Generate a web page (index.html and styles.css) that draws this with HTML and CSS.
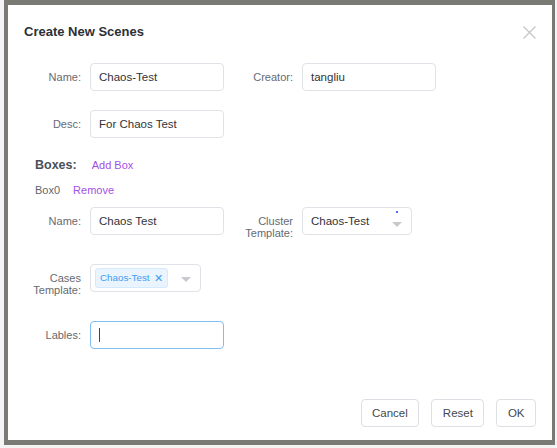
FILE: index.html
```html
<!DOCTYPE html>
<html>
<head>
<meta charset="utf-8">
<link rel="stylesheet" href="styles.css">
</head>
<body>
<div class="overlay">
  <div class="dialog">
    <div class="header">
      <div class="title">Create New Scenes</div>
      <svg class="close" width="13" height="13" viewBox="0 0 13 13"><path d="M0.5 0.5 L12.5 12.5 M12.5 0.5 L0.5 12.5" stroke="#c4c4c4" stroke-width="1.2" fill="none"/></svg>
    </div>
    <div class="body">
      <div class="row">
        <div class="field"><label class="lbl">Name:</label><div class="input">Chaos-Test</div></div>
        <div class="field"><label class="lbl">Creator:</label><div class="input">tangliu</div></div>
      </div>
      <div class="row">
        <div class="field"><label class="lbl">Desc:</label><div class="input">For Chaos Test</div></div>
      </div>
      <div class="boxes"><span class="boxes-title">Boxes:</span><a class="link">Add Box</a></div>
      <div class="box-head"><span class="box-name">Box0</span><a class="link">Remove</a></div>
      <div class="row tall">
        <div class="field"><label class="lbl">Name:</label><div class="input">Chaos Test</div></div>
        <div class="field"><label class="lbl">Cluster Template:</label>
          <div class="select sel-cluster">Chaos-Test<span class="arrow"></span><span class="dot"></span></div>
        </div>
      </div>
      <div class="row tall">
        <div class="field"><label class="lbl">Cases Template:</label>
          <div class="select sel-cases"><span class="tag">Chaos-Test<span class="tag-x">✕</span></span><span class="arrow"></span></div>
        </div>
      </div>
      <div class="row">
        <div class="field"><label class="lbl">Lables:</label><div class="input focus"><span class="caret"></span></div></div>
      </div>
    </div>
    <div class="footer">
      <button class="btn">Cancel</button>
      <button class="btn">Reset</button>
      <button class="btn">OK</button>
    </div>
  </div>
</div>
</body>
</html>
```
FILE: styles.css
```css
html, body {
  margin: 0;
  padding: 0;
  background: #f4f4f4;
  font-family: "Liberation Sans", Arial, sans-serif;
}
.overlay {
  margin-left: 4px;
  width: 551px;
  height: 445px;
  box-sizing: border-box;
  background: #7a7a74;
  padding: 5px 3px 5px 4px;
}
.dialog {
  width: 544px;
  height: 435px;
  background: #fff;
  box-sizing: border-box;
  display: flex;
  flex-direction: column;
  padding: 0 16px 13px 16px;
}
.header {
  display: flex;
  justify-content: space-between;
  align-items: center;
  height: 16px;
  margin-top: 19px;
}
.title {
  font-size: 13px;
  font-weight: bold;
  color: #2d3035;
  line-height: 16px;
}
.close {
  display: block;
  margin-top: 1px;
}
.body {
  flex: 1;
  margin-top: 23px;
}
.row {
  display: flex;
  gap: 12px;
  height: 28px;
  margin-bottom: 19px;
}
.row.tall {
  height: 38px;
}
.field {
  display: flex;
  align-items: flex-start;
}
.lbl {
  width: 57px;
  margin-right: 9px;
  text-align: right;
  font-size: 11px;
  line-height: 12px;
  padding-top: 8px;
  color: #666a70;
}
.input, .select {
  box-sizing: border-box;
  width: 134px;
  height: 28px;
  border: 1px solid #dfe2e6;
  border-radius: 4px;
  padding: 0 8px;
  font-size: 11.5px;
  line-height: 26px;
  color: #303338;
  position: relative;
}
.input.focus {
  border-color: #7fbdf3;
  display: flex;
  align-items: center;
}
.caret {
  display: block;
  width: 1px;
  height: 14px;
  background: #444;
}
.boxes {
  margin-top: -1px;
  line-height: 16px;
  padding-left: 11px;
}
.boxes-title {
  font-size: 12.5px;
  font-weight: bold;
  color: #4b5058;
  margin-right: 15px;
}
.link {
  font-size: 11px;
  color: #a450e6;
}
.box-head {
  margin-top: 8px;
  margin-bottom: 9px;
  line-height: 16px;
  padding-left: 11px;
}
.box-name {
  font-size: 11px;
  color: #62666c;
  margin-right: 13px;
}
.sel-cluster {
  width: 110px;
}
.sel-cases {
  width: 111px;
  padding: 0 4px;
  display: flex;
  align-items: center;
}
.tag {
  display: inline-flex;
  align-items: center;
  height: 20px;
  box-sizing: border-box;
  padding: 0 4px 0 4px;
  background: #e9f4ff;
  border: 1px solid #d5eafc;
  border-radius: 3px;
  font-size: 9.8px;
  line-height: 18px;
  color: #3f9cf0;
}
.tag-x {
  margin-left: 4px;
  font-size: 11px;
  color: #3f9cf0;
}
.arrow {
  position: absolute;
  right: 9px;
  top: 12px;
  width: 0;
  height: 0;
  border-left: 5px solid transparent;
  border-right: 5px solid transparent;
  border-top: 5px solid #c6c9ce;
}
.sel-cluster .arrow {
  top: 14px;
}
.dot {
  position: absolute;
  right: 13px;
  top: 3px;
  width: 2px;
  height: 2px;
  background: #1a3cf0;
  border-radius: 1px;
}
.footer {
  display: flex;
  justify-content: flex-end;
  gap: 12px;
}
.btn {
  font-family: "Liberation Sans", Arial, sans-serif;
  font-size: 11.5px;
  color: #44484e;
  background: #fff;
  border: 1px solid #dcdfe3;
  border-radius: 4px;
  height: 28px;
  padding: 0 10.5px;
}
```
